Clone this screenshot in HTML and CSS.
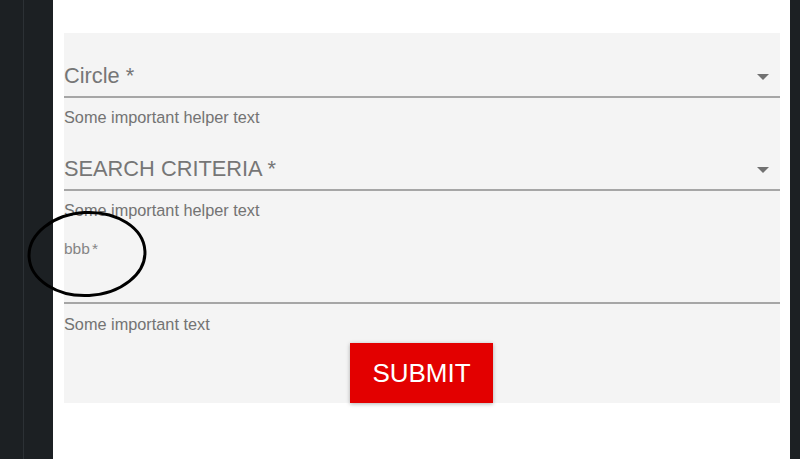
FILE: index.html
```html
<!DOCTYPE html>
<html>
<head>
<meta charset="utf-8">
<link rel="stylesheet" href="styles.css">
</head>
<body>
<div class="app">
  <aside class="sidebar"><div class="sidebar-rule"></div></aside>
  <main class="main">
    <form class="panel">
      <div class="select">
        <span class="select-label">Circle *</span>
        <span class="caret"></span>
      </div>
      <div class="helper">Some important helper text</div>
      <div class="select">
        <span class="select-label">SEARCH CRITERIA *</span>
        <span class="caret"></span>
      </div>
      <div class="helper">Some important helper text</div>
      <div class="textfield">
        <span class="field-label">bbb<span class="req">*</span></span>
      </div>
      <div class="helper helper-last">Some important text</div>
      <div class="actions">
        <button type="button" class="submit">SUBMIT</button>
      </div>
    </form>
    <svg class="annotation" width="124" height="92" viewBox="0 0 124 92">
      <ellipse cx="61" cy="45" rx="58" ry="41.5" fill="none" stroke="#000" stroke-width="3" transform="rotate(-3 61 45)"/>
    </svg>
  </main>
  <div class="edge"></div>
</div>
</body>
</html>
```
FILE: styles.css
```css
html, body {
  margin: 0;
  padding: 0;
  width: 800px;
  height: 459px;
  overflow: hidden;
  background: #ffffff;
  font-family: "Liberation Sans", Arial, sans-serif;
}

.app {
  display: flex;
  height: 459px;
}

.sidebar {
  width: 53px;
  flex: 0 0 53px;
  background: #1c2023;
}

.sidebar-rule {
  margin-left: 23px;
  width: 1px;
  height: 100%;
  background: #2c3135;
}

.edge {
  flex: 0 0 10px;
  background: #1c2023;
}

.main {
  flex: 1;
  position: relative;
  padding: 33px 10px 0 11px;
  background: #ffffff;
}

.panel {
  background: #f4f4f4;
  display: flex;
  flex-direction: column;
  margin: 0;
}

.select {
  display: flex;
  align-items: flex-start;
  justify-content: space-between;
  padding-top: 31px;
  height: 32px;
  border-bottom: 2px solid #a6a6a6;
}

.select-label {
  font-size: 21.8px;
  line-height: 24px;
  color: #767676;
}

.caret {
  width: 0;
  height: 0;
  border-left: 6px solid transparent;
  border-right: 6px solid transparent;
  border-top: 6px solid #717171;
  margin: 10px 11px 0 0;
}

.helper {
  margin-top: 10px;
  font-size: 16.3px;
  line-height: 18px;
  color: #737373;
}

.helper-last {
  margin-top: 11px;
}

.textfield {
  height: 62px;
  padding-top: 21px;
  border-bottom: 2px solid #a6a6a6;
}

.field-label {
  font-size: 15.5px;
  line-height: 18px;
  color: #858585;
}

.req {
  margin-left: 2px;
}

.actions {
  display: flex;
  justify-content: center;
  margin-top: 10px;
}

.submit {
  width: 143px;
  height: 60px;
  border: none;
  background: #e30000;
  color: #ffffff;
  font-family: "Liberation Sans", Arial, sans-serif;
  font-size: 26px;
  padding: 0;
  box-shadow: 0 1px 4px rgba(0, 0, 0, 0.3);
  margin-left: -1px;
}

.annotation {
  position: absolute;
  left: -27px;
  top: 209px;
}
```
